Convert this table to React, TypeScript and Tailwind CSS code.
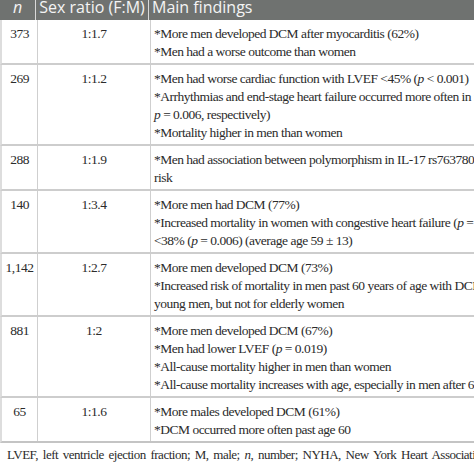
import React from "react";

const P = () => <i>p</i>;

type Row = { n: string; ratio: string; lines: React.ReactNode[] };

const rows: Row[] = [
  {
    n: "373",
    ratio: "1:1.7",
    lines: ["*More men developed DCM after myocarditis (62%)", "*Men had a worse outcome than women"],
  },
  {
    n: "269",
    ratio: "1:1.2",
    lines: [
      <>
        *Men had worse cardiac function with LVEF &lt;45% (<P /> &lt; 0.001)
      </>,
      <>
        *Arrhythmias and end-stage heart failure occurred more often in men (<P /> = 0.004 and
      </>,
      <>
        <P /> = 0.006, respectively)
      </>,
      "*Mortality higher in men than women",
    ],
  },
  {
    n: "288",
    ratio: "1:1.9",
    lines: ["*Men had association between polymorphism in IL-17 rs7637800 and DCM", "risk"],
  },
  {
    n: "140",
    ratio: "1:3.4",
    lines: [
      "*More men had DCM (77%)",
      <>
        *Increased mortality in women with congestive heart failure (<P /> = 0.02) and LVEF
      </>,
      <>
        &lt;38% (<P /> = 0.006) (average age 59 ± 13)
      </>,
    ],
  },
  {
    n: "1,142",
    ratio: "1:2.7",
    lines: [
      "*More men developed DCM (73%)",
      "*Increased risk of mortality in men past 60 years of age with DCM compared to",
      "young men, but not for elderly women",
    ],
  },
  {
    n: "881",
    ratio: "1:2",
    lines: [
      "*More men developed DCM (67%)",
      <>
        *Men had lower LVEF (<P /> = 0.019)
      </>,
      "*All-cause mortality higher in men than women",
      "*All-cause mortality increases with age, especially in men after 60",
    ],
  },
  {
    n: "65",
    ratio: "1:1.6",
    lines: ["*More males developed DCM (61%)", "*DCM occurred more often past age 60"],
  },
];

export default function App() {
  return (
    <div className="w-[474px] h-[474px] overflow-hidden bg-white text-[#2b2b2b] font-['Liberation_Serif',serif]">
      {/* header */}
      <div className="grid grid-cols-[36px_113px_1fr] h-[20px] bg-[#6f7270] text-[#f4f4f4] font-['Open_Sans',sans-serif] text-[16px] leading-[14px] overflow-hidden">
        <div className="border-r border-[#d9d9d9] text-center italic">n</div>
        <div className="border-r border-[#d9d9d9] text-center whitespace-nowrap">Sex ratio (F:M)</div>
        <div className="pl-[3px] whitespace-nowrap">Main findings</div>
      </div>
      {rows.map((row, i) => (
        <div
          key={i}
          className={`grid grid-cols-[36px_113px_1fr] border-l-[2px] border-[#dddddd] text-[13.5px] leading-[18px] tracking-[-0.5px] ${
            i === rows.length - 1 ? "border-b-[2px] border-b-[#c4c4c4]" : "border-b-[2px] border-b-[#cdcdcd]"
          }`}
        >
          <div className="border-r border-[#cfcfcf] text-center pt-[5px] pb-[2px]">{row.n}</div>
          <div className="border-r border-[#cfcfcf] text-center pt-[5px] pb-[2px]">{row.ratio}</div>
          <div className="pl-[3px] pt-[5px] pb-[2px] whitespace-nowrap">
            {row.lines.map((l, j) => (
              <div key={j}>{l}</div>
            ))}
          </div>
        </div>
      ))}
      <div className="pl-[7px] pt-[4px] text-[13px] leading-[16px] tracking-[-0.5px] whitespace-nowrap [word-spacing:2px]">
        LVEF, left ventricle ejection fraction; M, male; <i>n</i>, number; NYHA, New York Heart Association.
      </div>
    </div>
  );
}
